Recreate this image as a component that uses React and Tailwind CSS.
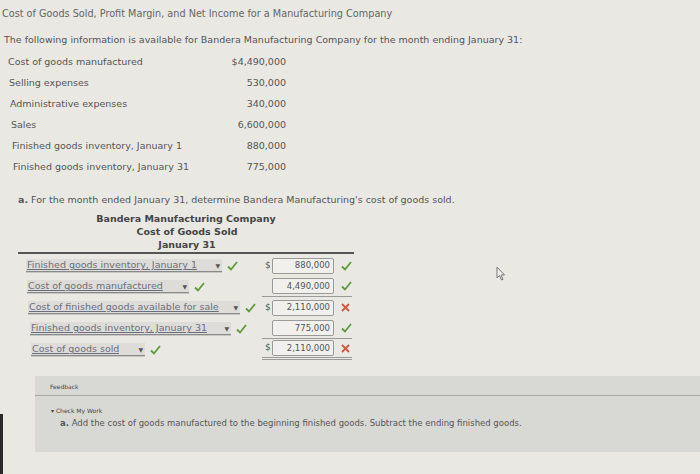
import React from 'react';

const data = [
  ['Cost of goods manufactured', '$4,490,000'],
  ['Selling expenses', '530,000'],
  ['Administrative expenses', '340,000'],
  ['Sales', '6,600,000'],
  ['Finished goods inventory, January 1', '880,000'],
  ['Finished goods inventory, January 31', '775,000'],
];

const rows = [
  { label: 'Finished goods inventory, January 1', w: 'w-[196px]', pad: 'pl-[26px]', dollar: true, value: '880,000', ok: true, line: '' },
  { label: 'Cost of goods manufactured', w: 'w-[162px]', pad: 'pl-[27px]', dollar: false, value: '4,490,000', ok: true, line: 'border-b border-[#9a9a9a]' },
  { label: 'Cost of finished goods available for sale', w: 'w-[212px]', pad: 'pl-[28px]', dollar: true, value: '2,110,000', ok: false, line: '' },
  { label: 'Finished goods inventory, January 31', w: 'w-[201px]', pad: 'pl-[30px]', dollar: false, value: '775,000', ok: true, line: 'border-b border-[#9a9a9a]' },
  { label: 'Cost of goods sold', w: 'w-[114px]', pad: 'pl-[31px]', dollar: true, value: '2,110,000', ok: false, line: 'border-b-[3px] border-double border-[#9a9a9a]' },
];

function Check() {
  return (
    <svg width="11" height="10" viewBox="0 0 11 10" className="shrink-0">
      <path d="M1 5.5 L4 8.5 L10 1" fill="none" stroke="#5f9a3a" strokeWidth="1.8" />
    </svg>
  );
}

function Cross() {
  return (
    <svg width="9" height="9" viewBox="0 0 9 9" className="shrink-0">
      <path d="M1 1 L8 8 M8 1 L1 8" fill="none" stroke="#d9553a" strokeWidth="1.8" />
    </svg>
  );
}

function Select({ label, w }) {
  return (
    <div className={`${w} h-[13px] flex items-center justify-between bg-[#dedcd8] border-b border-[#8a8a8a] shadow-[0_1px_0_#c9c7c3]`}>
      <span className="text-[9.5px] text-[#6a6f80] underline leading-none truncate pl-[1px]">{label}</span>
      <span className="text-[6px] text-[#555] pr-[2px]">▼</span>
    </div>
  );
}

export default function App() {
  return (
    <div className="w-[700px] h-[474px] overflow-hidden bg-[#e9e8e3] text-[#555] relative" style={{ fontFamily: '"DejaVu Sans", Verdana, sans-serif' }}>
      <div className="pl-[2px] pt-[7px] text-[9.7px] text-[#666]">Cost of Goods Sold, Profit Margin, and Net Income for a Manufacturing Company</div>
      <div className="pl-[4px] pt-[11px] text-[9.5px] text-[#555]">The following information is available for Bandera Manufacturing Company for the month ending January 31:</div>

      <div className="pl-[8px] pt-[5px] w-[286px] flex flex-col">
        {data.map(([l, v], i) => (
          <div key={l} className="h-[21px] flex items-center justify-between" style={{ paddingLeft: i + 'px' }}>
            <span className="text-[9.5px] text-[#555]">{l}</span>
            <span className="text-[9.5px] text-[#555]">{v}</span>
          </div>
        ))}
      </div>

      <div className="pl-[18px] pt-[15px] text-[9.5px] text-[#555]">
        <span className="font-bold">a.</span> For the month ended January 31, determine Bandera Manufacturing's cost of goods sold.
      </div>

      <div className="ml-[18px] w-[336px] mt-[5px] border-b-2 border-[#555] pb-[1px] flex flex-col items-center text-[9.5px] font-bold text-[#444] leading-[13px]">
        <div>Bandera Manufacturing Company</div>
        <div className="pl-[2px]">Cost of Goods Sold</div>
        <div className="pl-[2px]">January 31</div>
      </div>

      <div className="flex flex-col pt-[1px]">
        {rows.map((r) => (
          <div key={r.label} className="flex items-center h-[21px]">
            <div className={`${r.pad} w-[262px] flex items-center gap-[5px]`}>
              <Select label={r.label} w={r.w} />
              <Check />
            </div>
            <div className={`w-[90px] h-[21px] flex items-center ${r.line}`}>
              <span className="w-[10px] text-[9px] text-[#555] pl-[3px]">{r.dollar ? '$' : ''}</span>
              <div className="w-[62px] h-[16px] border border-[#9a9a9a] rounded-[2px] bg-[#f1f0ec] flex items-center justify-end pr-[3px] text-[8.5px] text-[#555]">{r.value}</div>
              <span className="pl-[7px]">{r.ok ? <Check /> : <Cross />}</span>
            </div>
          </div>
        ))}
      </div>

      <div className="ml-[35px] mt-[16px] w-[665px] h-[76px] bg-[#d8d9d5] flex flex-col">
        <div className="pl-[15px] pt-[6px] pb-[4px] text-[6px] text-[#444] border-b border-[#a7a8a4]">Feedback</div>
        <div className="pl-[16px] pt-[10px] text-[6px] text-[#444]">▾ Check My Work</div>
        <div className="pl-[25px] pt-[2px] text-[8.5px] text-[#555]"><span className="font-bold">a.</span> Add the cost of goods manufactured to the beginning finished goods. Subtract the ending finished goods.</div>
      </div>

      <svg className="absolute left-[496px] top-[266px]" width="10" height="15" viewBox="0 0 10 15">
        <path d="M1 1 L1 12 L3.5 9.5 L5.5 14 L7 13.3 L5 9 L8.5 9 Z" fill="#eeeeea" stroke="#777" strokeWidth="1" />
      </svg>
      <div className="absolute left-0 bottom-0 w-[3px] h-[60px] bg-[#2a2a2a]" />
    </div>
  );
}
